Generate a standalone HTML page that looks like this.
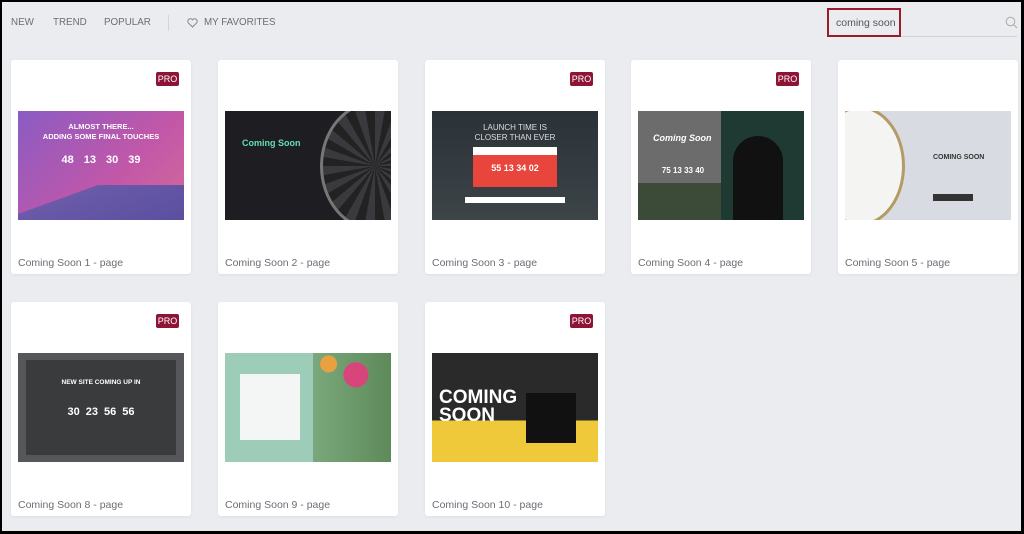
<!DOCTYPE html>
<html><head><style>
*{margin:0;padding:0;box-sizing:border-box}
body{width:1024px;height:534px;background:#000;font-family:"Liberation Sans",sans-serif;overflow:hidden;position:relative}
.bg{position:absolute;left:2px;top:2px;width:1019px;height:529px;background:#ebecf0}
.nav{position:absolute;top:17px;font-size:9.8px;color:#6b6e75;letter-spacing:0}
.card{position:absolute;width:180px;height:214px;background:#fff;border-radius:3px;box-shadow:0 1px 3px rgba(0,0,0,.06)}
.pro{position:absolute;right:12px;top:12px;width:23px;height:14px;background:#8e1436;color:#fff;font-size:9px;line-height:14px;text-align:center;border-radius:2px}
.th{position:absolute;left:7px;top:51px;width:166px;height:109px;overflow:hidden;color:#fff;text-align:center}
.lb{position:absolute;left:7px;top:197px;font-size:10.5px;color:#6b6e75}
.num{font-weight:bold;font-size:11px;display:inline-block;margin:0 5px}
</style></head><body>
<div class="bg"></div>
<div class="nav" style="left:11px">NEW</div>
<div class="nav" style="left:53px">TREND</div>
<div class="nav" style="left:104px">POPULAR</div>
<div style="position:absolute;left:168px;top:15px;width:1px;height:16px;background:#d4d5da"></div>
<svg style="position:absolute;left:187px;top:18px" width="11" height="10" viewBox="0 0 11 10"><path d="M5.5 9 L1.3 4.8 A2.3 2.3 0 0 1 5.5 1.8 A2.3 2.3 0 0 1 9.7 4.8 Z" fill="none" stroke="#888" stroke-width="1"/></svg>
<div class="nav" style="left:204px">MY FAVORITES</div>
<div style="position:absolute;left:827px;top:8px;width:74px;height:29px;border:2px solid #9b1b2c"></div>
<div style="position:absolute;left:836px;top:17px;font-size:10.5px;color:#555">coming soon</div>
<div style="position:absolute;left:901px;top:36px;width:116px;height:1px;background:#d2d3d8"></div>
<svg style="position:absolute;left:1005px;top:16px" width="13" height="13" viewBox="0 0 13 13"><circle cx="5.5" cy="5.5" r="4.3" fill="none" stroke="#aaa" stroke-width="1"/><path d="M8.7 8.7L12 12" stroke="#aaa" stroke-width="1"/></svg>

<div class="card" style="left:11px;top:60px"><div class="pro">PRO</div>
<div class="th" style="background:linear-gradient(135deg,#8a5cc4,#c257a8 60%,#d46a9a)"><div style="margin-top:11px;font-size:7.5px;font-weight:bold;line-height:10px">ALMOST THERE...<br>ADDING SOME FINAL TOUCHES</div><div style="margin-top:8px"><span class="num">48</span><span class="num">13</span><span class="num">30</span><span class="num">39</span></div><div style="position:absolute;bottom:0;left:0;width:166px;height:35px;background:linear-gradient(160deg,transparent 30%,#6a5aa8 31%,#5a4fa0)"></div></div>
<div class="lb">Coming Soon 1 - page</div></div>

<div class="card" style="left:218px;top:60px">
<div class="th" style="background:#1e1e22"><div style="position:absolute;left:17px;top:27px;font-size:9px;font-weight:bold;color:#5fe0b0">Coming Soon</div><div style="position:absolute;left:95px;top:-10px;width:110px;height:130px;border-radius:50%;border:3px solid #777;background:repeating-conic-gradient(#3a3a3e 0 10deg,#222 10deg 20deg)"></div></div>
<div class="lb">Coming Soon 2 - page</div></div>

<div class="card" style="left:425px;top:60px"><div class="pro">PRO</div>
<div class="th" style="background:linear-gradient(#2a3238,#3d4448)"><div style="margin-top:12px;font-size:8px;line-height:10px;color:#ddd">LAUNCH TIME IS<br>CLOSER THAN EVER</div><div style="margin:4px auto 0;width:84px;height:40px;background:#e8453c;border-top:8px solid #fff"><span style="font-size:9px;font-weight:bold;line-height:26px">55 13 34 02</span></div><div style="margin:10px auto 0;width:100px;height:6px;background:#fff"></div></div>
<div class="lb">Coming Soon 3 - page</div></div>

<div class="card" style="left:631px;top:60px"><div class="pro">PRO</div>
<div class="th" style="background:linear-gradient(90deg,#6c6c6c 0 50%,#1e3a32 50%)"><div style="position:absolute;left:5px;top:22px;width:70px;text-align:left;font-size:9px;font-style:italic;font-weight:bold;padding-left:10px">Coming Soon</div><div style="position:absolute;left:5px;top:55px;font-size:8px;font-weight:bold;width:80px">75 13 33 40</div><div style="position:absolute;left:0;top:72px;width:83px;height:37px;background:#3c4a38"></div><div style="position:absolute;left:95px;top:25px;width:50px;height:84px;background:#111;border-radius:25px 25px 0 0"></div></div>
<div class="lb">Coming Soon 4 - page</div></div>

<div class="card" style="left:838px;top:60px">
<div class="th" style="background:#d8dce2"><div style="position:absolute;left:-30px;top:-5px;width:90px;height:120px;border-radius:50%;background:#f4f4f2;border:3px solid #b49a64"></div><div style="position:absolute;left:88px;top:43px;font-size:7px;font-weight:bold;color:#333">COMING SOON</div><div style="position:absolute;left:88px;top:83px;width:40px;height:7px;background:#333"></div></div>
<div class="lb">Coming Soon 5 - page</div></div>

<div class="card" style="left:11px;top:302px"><div class="pro">PRO</div>
<div class="th" style="background:#55575a"><div style="position:absolute;left:8px;top:7px;width:150px;height:95px;background:#3a3b3d"></div><div style="position:relative;margin-top:26px;font-size:6.5px;font-weight:bold">NEW SITE COMING UP IN</div><div style="position:relative;margin-top:16px"><span class="num" style="margin:0 3px">30</span><span class="num" style="margin:0 3px">23</span><span class="num" style="margin:0 3px">56</span><span class="num" style="margin:0 3px">56</span></div></div>
<div class="lb">Coming Soon 8 - page</div></div>

<div class="card" style="left:218px;top:302px">
<div class="th" style="background:#9dcdb8"><div style="position:absolute;left:15px;top:21px;width:60px;height:66px;background:#f3f6f4"></div><div style="position:absolute;left:88px;top:0;width:78px;height:109px;background:radial-gradient(circle at 55% 20%,#d8457a 0 12px,transparent 13px),radial-gradient(circle at 20% 10%,#e8a040 0 8px,transparent 9px),linear-gradient(90deg,#7aa87c,#5e8a5a)"></div></div>
<div class="lb">Coming Soon 9 - page</div></div>

<div class="card" style="left:425px;top:302px"><div class="pro">PRO</div>
<div class="th" style="background:linear-gradient(#2a2a2a 0 62%,#f0c93a 62%)"><div style="position:absolute;left:7px;top:36px;font-size:19px;font-weight:bold;line-height:18px;text-align:left">COMING<br>SOON</div><div style="position:absolute;left:94px;top:40px;width:50px;height:50px;background:#111"></div></div>
<div class="lb">Coming Soon 10 - page</div></div>
</body></html>
